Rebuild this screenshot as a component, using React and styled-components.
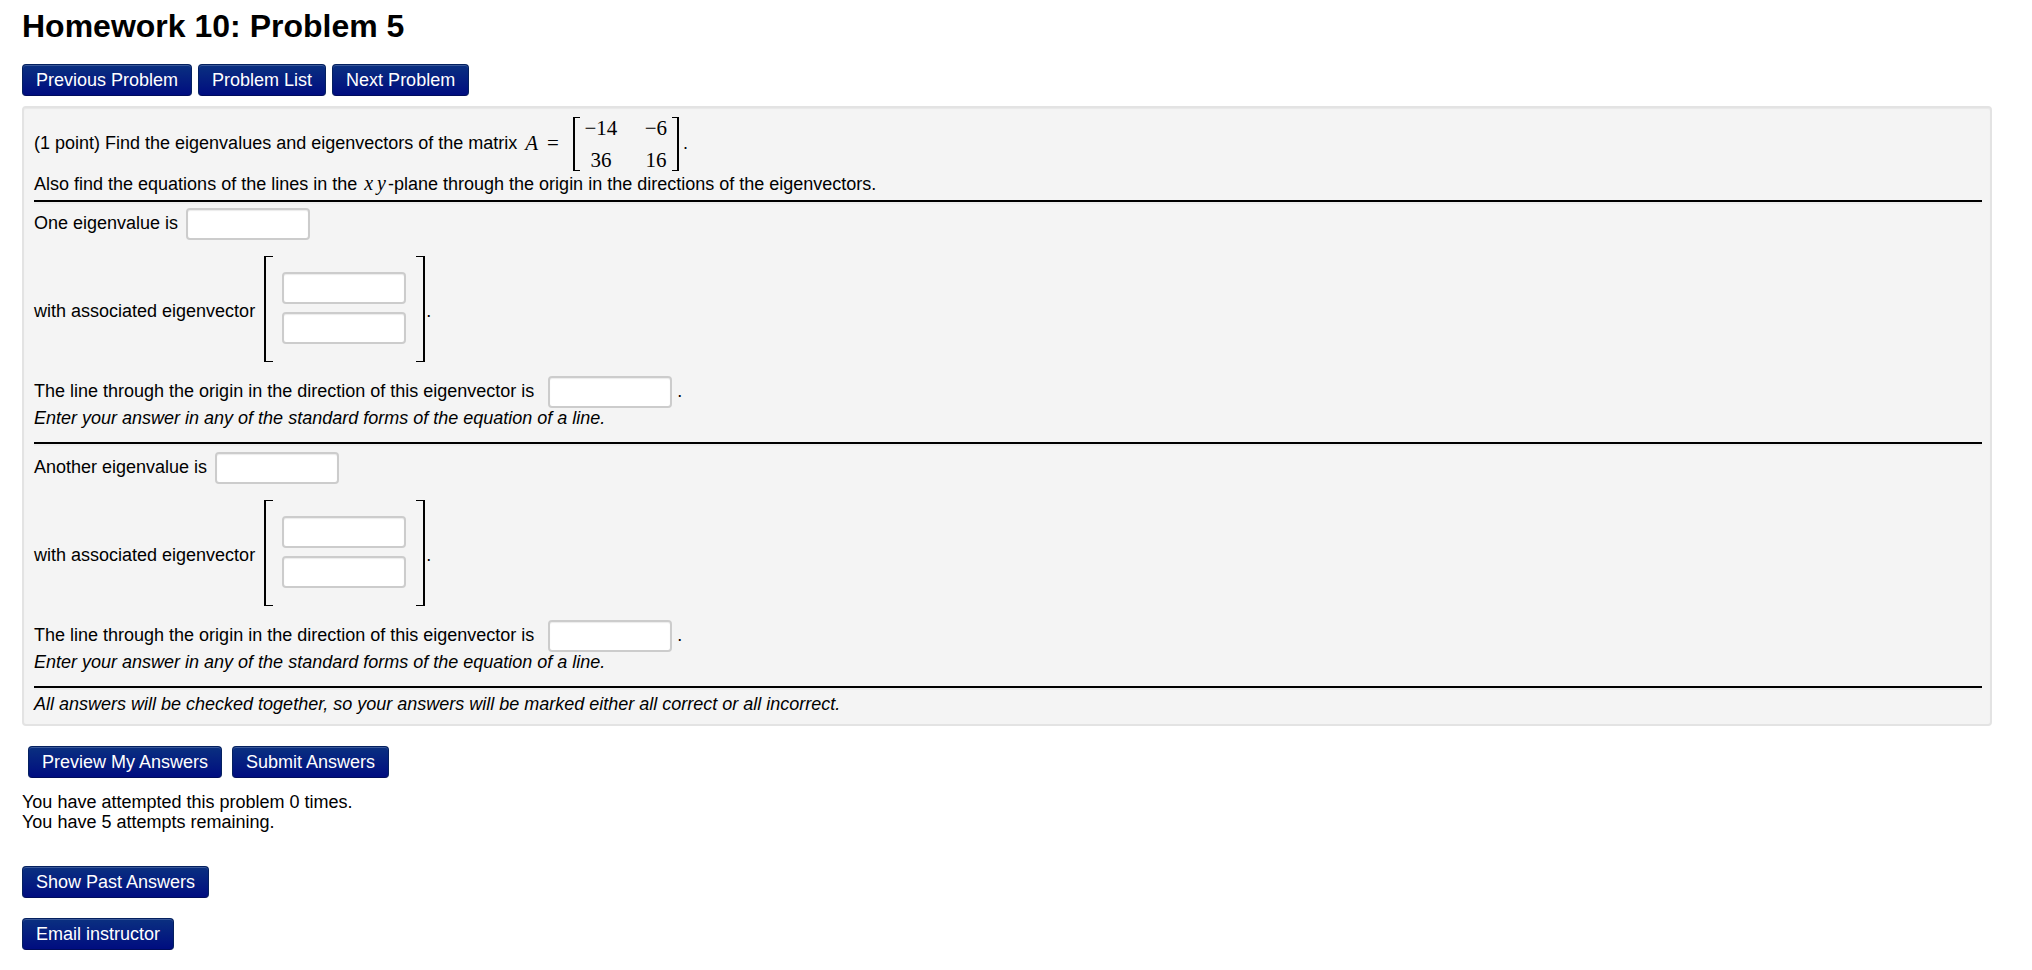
import React, { useState } from "react";
import styled, { createGlobalStyle } from "styled-components";

const GlobalStyle = createGlobalStyle`
body {
margin: 0;
background-color: #fff;
color: #000;
font-family: "Liberation Sans", Helvetica, Arial, sans-serif;
font-size: 18px;
line-height: 20px;
}
`
const Main = styled.main`
padding: 6px 40px 20px 22px;
`
const Title = styled.h1`
font-size: 32px;
line-height: 40px;
margin: 0 0 18px;
`
const ButtonBar = styled.div`
display: flex;
gap: ${props => props.$gap || "6px"};
margin: ${props => props.$margin || "0"};
`
const Button = styled.button`
height: 32px;
padding: 0 13px;
border: 1px solid #04205f;
border-bottom-color: #000c5c;
border-radius: 4px;
background-image: linear-gradient(#0a3080, #000d80);
box-shadow: inset 0 1px 0 rgba(255, 255, 255, 0.2);
color: #fff;
font-family: inherit;
font-size: 18px;
line-height: 20px;
cursor: pointer;
`
const Panel = styled.section`
margin-top: 10px;
padding: 9px 8px 10px 10px;
border: 2px solid #e3e3e3;
border-radius: 4px;
background-color: #f4f4f4;
box-shadow: inset 0 1px 1px rgba(0, 0, 0, 0.05);
`
const Row = styled.div`
display: flex;
align-items: center;
margin-top: ${props => props.$top || "0"};
`
const Text = styled.span`
padding-bottom: 2px;
`
const VectorText = styled.span`
padding-top: 4px;
`
const Label = styled.label`
padding-bottom: 2px;
margin-right: ${props => props.$gap || "8px"};
`
const Line = styled.p`
margin: ${props => props.$top || "0"} 0 0;
`
const Note = styled(Line)`
font-style: italic;
`
const Rule = styled.hr`
margin: ${props => props.$margin} 0;
border: 0;
border-top: 2px solid #000;
border-bottom: 2px solid #ededed;
`
const Variable = styled.i`
font-family: "Liberation Serif", "Times New Roman", serif;
font-size: 20px;
line-height: 20px;
margin: 0 2px;
`
const Equation = styled.span`
display: flex;
gap: 9px;
padding-bottom: 2px;
margin: 0 14px 0 8px;
font-family: "Liberation Serif", "Times New Roman", serif;
font-size: 21px;
`
const Bracket = styled.span`
align-self: stretch;
box-sizing: border-box;
width: ${props => props.$width};
border: 1px solid #000;
border-width: ${props => props.$side === "left" ? "1px 0 1px 2px" : "1px 2px 1px 0"};
`
const Matrix = styled.span`
display: inline-flex;
height: 54px;
margin-right: 4px;
`
const Cells = styled.span`
display: grid;
grid-template-columns: 36px 26px;
column-gap: 24px;
align-content: center;
justify-items: center;
margin: 0 3px;
font-family: "Liberation Serif", "Times New Roman", serif;
font-size: 21px;
line-height: 32px;
`
const Vector = styled.span`
display: flex;
margin: 0 1px 0 9px;
`
const Entries = styled.span`
display: flex;
flex-direction: column;
gap: 8px;
padding: 16px 10px 18px 9px;
`
const Input = styled.input`
box-sizing: border-box;
width: 124px;
height: 32px;
padding: 4px 6px;
border: 2px solid #ccc;
border-radius: 4px;
background-color: #fff;
box-shadow: inset 0 1px 1px rgba(0, 0, 0, 0.08);
font-family: inherit;
font-size: 18px;
`
const Dot = styled(Text)`
margin-left: 5px;
`


const Eigenpair = ({ id, label, answers, onChange }) => {

  const field = name => ({
    id: `${id}-${name}`,
    name: `${id}-${name}`,
    type: "text",
    value: answers[`${id}-${name}`] || '',
    onChange
  })

  return (
    <>
      <Row $top="4px">
        <Label htmlFor={`${id}-value`}>{label}</Label>
        <Input {...field('value')} />
      </Row>
      <Row $top="16px">
        <VectorText>with associated eigenvector</VectorText>
        <Vector>
          <Bracket $side="left" $width="9px" />
          <Entries>
            <Input aria-label="First entry" {...field('top')} />
            <Input aria-label="Second entry" {...field('bottom')} />
          </Entries>
          <Bracket $side="right" $width="9px" />
        </Vector>
        <VectorText>.</VectorText>
      </Row>
      <Row $top="14px">
        <Label $gap="14px" htmlFor={`${id}-line`}>The line through the origin in the direction of this eigenvector is</Label>
        <Input {...field('line')} />
        <Dot>.</Dot>
      </Row>
      <Note>Enter your answer in any of the standard forms of the equation of a line.</Note>
    </>
  )
}

const App = () => {

  const [answers, setAnswers] = useState({})

  const handleChange = event => {
    setAnswers({ ...answers, [event.target.name]: event.target.value })
  }

  const handleSubmit = event => {
    event.preventDefault();
  }

  return (
    <Main>
      <GlobalStyle />
      <Title>Homework 10: Problem 5</Title>
      <ButtonBar>
        <Button type="button">Previous Problem</Button>
        <Button type="button">Problem List</Button>
        <Button type="button">Next Problem</Button>
      </ButtonBar>
      <form onSubmit={handleSubmit}>
        <Panel>
          <Row>
            <Text>(1 point) Find the eigenvalues and eigenvectors of the matrix</Text>
            <Equation><i>A</i><span>=</span></Equation>
            <Matrix>
              <Bracket $side="left" $width="7px" />
              <Cells>
                <span>−14</span>
                <span>−6</span>
                <span>36</span>
                <span>16</span>
              </Cells>
              <Bracket $side="right" $width="7px" />
            </Matrix>
            <Text>.</Text>
          </Row>
          <Line $top="2px">
            Also find the equations of the lines in the <Variable>x</Variable><Variable>y</Variable>-plane through the origin in the directions of the eigenvectors.
          </Line>
          <Rule $margin="6px 0 0" />
          <Eigenpair id="first" label="One eigenvalue is" answers={answers} onChange={handleChange} />
          <Rule $margin="14px 0 6px" />
          <Eigenpair id="second" label="Another eigenvalue is" answers={answers} onChange={handleChange} />
          <Rule $margin="14px 0 0" />
          <Note $top="4px">All answers will be checked together, so your answers will be marked either all correct or all incorrect.</Note>
        </Panel>
        <ButtonBar $gap="10px" $margin="20px 0 14px 6px">
          <Button type="submit">Preview My Answers</Button>
          <Button type="submit">Submit Answers</Button>
        </ButtonBar>
      </form>
      <Line>You have attempted this problem 0 times.</Line>
      <Line>You have 5 attempts remaining.</Line>
      <ButtonBar $margin="34px 0 20px">
        <Button type="button">Show Past Answers</Button>
      </ButtonBar>
      <ButtonBar>
        <Button type="button">Email instructor</Button>
      </ButtonBar>
    </Main>
  );
};

export default App;
